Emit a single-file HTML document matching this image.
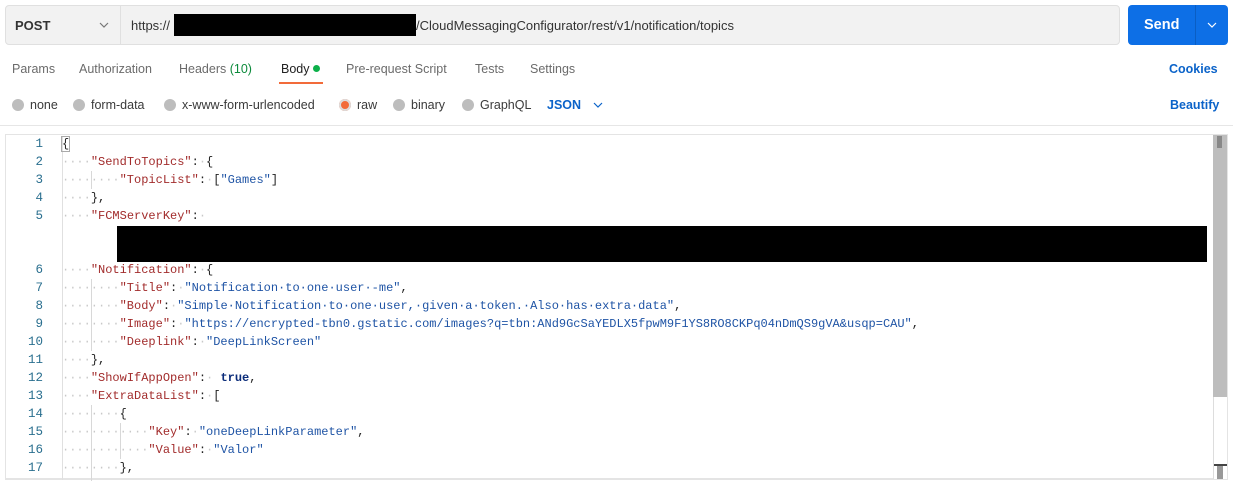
<!DOCTYPE html>
<html><head><meta charset="utf-8"><style>
*{margin:0;padding:0;box-sizing:border-box}
body{width:1233px;height:481px;background:#fff;font-family:"Liberation Sans",sans-serif;position:relative;overflow:hidden;color:#212121}
.abs{position:absolute}
.url{left:5px;top:5px;width:1115px;height:40px;background:#f2f2f2;border:1px solid #e0e0e0;border-radius:4px}
.method{left:5px;top:5px;width:116px;height:40px;border-right:1px solid #e0e0e0}
.t13{font-size:13px}
.send{left:1128px;top:5px;width:100px;height:40px;background:#0d6fe6;border-radius:4px;color:#fff}
.tab{top:62px;font-size:12.5px;color:#6b6b6b}
.radio{top:98px;font-size:12.5px;color:#3a3a3a}
.dot{display:inline-block;width:12px;height:12px;border-radius:50%;background:#bdbdbd;vertical-align:-2px;margin-right:6px}
.editor{left:5px;top:134px;width:1223px;height:346px;border:1px solid #e4e4e4;border-bottom:2px solid #e4e4e4}
.ln{position:absolute;left:0;width:43px;text-align:right;font-family:"Liberation Mono",monospace;font-size:12.5px;color:#2a6f8f;line-height:18px}
.code{position:absolute;left:62px;font-family:"Liberation Mono",monospace;font-size:12px;line-height:18px;white-space:pre;color:#222}
.d{color:#c8c8c8}.k{color:#a22c2c}.s{color:#1f54a5}.b{color:#0b2c7a;font-weight:bold}
.g{position:absolute;width:1px;background:#d8d8d8}
</style></head><body>
<div class="abs url"></div>
<div class="abs method"></div>
<div class="abs t13" style="left:15px;top:18px;font-weight:bold;color:#333">POST</div>
<svg class="abs" style="left:99px;top:21px" width="10" height="8"><path d="M1 2l4 4 4-4" fill="none" stroke="#777" stroke-width="1.2"/></svg>
<div class="abs t13" style="left:131px;top:18px;color:#333">https://</div>
<div class="abs" style="left:174px;top:14px;width:242px;height:22px;background:#000"></div>
<div class="abs t13" style="left:416px;top:18px;color:#333">/CloudMessagingConfigurator/rest/v1/notification/topics</div>
<div class="abs send"></div>
<div class="abs" style="left:1195px;top:5px;width:1px;height:40px;background:#0a5ec4"></div>
<div class="abs" style="left:1144px;top:17px;color:#fff;font-size:14.5px;font-weight:bold">Send</div>
<svg class="abs" style="left:1207px;top:21px" width="10" height="8"><path d="M1 2l4 4 4-4" fill="none" stroke="#fff" stroke-width="1.2"/></svg>

<div class="abs tab" style="left:12px">Params</div>
<div class="abs tab" style="left:79px">Authorization</div>
<div class="abs tab" style="left:179px">Headers <span style="color:#0c8a3b">(10)</span></div>
<div class="abs tab" style="left:281px;color:#212121">Body <span style="display:inline-block;width:7px;height:7px;border-radius:50%;background:#0cb04a;vertical-align:1px"></span></div>
<div class="abs" style="left:279px;top:82px;width:44px;height:2px;background:#f26b3a"></div>
<div class="abs tab" style="left:346px">Pre-request Script</div>
<div class="abs tab" style="left:475px">Tests</div>
<div class="abs tab" style="left:530px">Settings</div>
<div class="abs" style="left:1169px;top:62px;font-size:12.5px;font-weight:bold;color:#0b63c9">Cookies</div>

<div class="abs radio" style="left:12px"><span class="dot"></span>none</div>
<div class="abs radio" style="left:73px"><span class="dot"></span>form-data</div>
<div class="abs radio" style="left:164px"><span class="dot"></span>x-www-form-urlencoded</div>
<div class="abs radio" style="left:339px"><span class="dot" style="background:#f26b3a;box-shadow:inset 0 0 0 2px #ddd"></span>raw</div>
<div class="abs radio" style="left:393px"><span class="dot"></span>binary</div>
<div class="abs radio" style="left:462px"><span class="dot"></span>GraphQL</div>
<div class="abs" style="left:547px;top:98px;font-size:12.5px;font-weight:bold;color:#0b63c9">JSON</div>
<svg class="abs" style="left:593px;top:101px" width="10" height="8"><path d="M1 2l4 4 4-4" fill="none" stroke="#0b63c9" stroke-width="1.2"/></svg>
<div class="abs" style="left:1170px;top:98px;font-size:12.5px;font-weight:bold;color:#0b63c9">Beautify</div>
<div class="abs" style="left:0;top:125px;width:1233px;height:1px;background:#e6e6e6"></div>

<div class="abs editor"></div>
<div class="abs" style="left:62px;top:136px;width:1px;height:344px;background:#e0e0e0"></div>
<div class="g" style="left:91px;top:171px;height:18px"></div>
<div class="g" style="left:91px;top:279px;height:72px"></div>
<div class="g" style="left:91px;top:405px;height:76px"></div>
<div class="g" style="left:120px;top:423px;height:36px"></div>
<div class="abs" style="left:1213px;top:135px;width:14px;height:344px;background:#fff;border-left:1px solid #ddd"></div>
<div class="abs" style="left:1213px;top:135px;width:14px;height:262px;background:#bdbdbd"></div>
<div class="abs" style="left:1217px;top:136px;width:5px;height:12px;background:#888"></div>
<div class="abs" style="left:1214px;top:464px;width:13px;height:2px;background:#444"></div>
<div class="abs" style="left:1217px;top:466px;width:6px;height:13px;background:#999"></div>
<div class="abs" style="left:117px;top:226px;width:1090px;height:36px;background:#000"></div>

<div class="ln" style="top:135px">1<br>2<br>3<br>4<br>5</div>
<div class="ln" style="top:261px">6<br>7<br>8<br>9<br>10<br>11<br>12<br>13<br>14<br>15<br>16<br>17</div>
<div class="code" style="top:135px"><span style="outline:1px solid #aaa">{</span>
<span class="d">····</span><span class="k">"SendToTopics"</span>:<span class="d">·</span>{
<span class="d">········</span><span class="k">"TopicList"</span>:<span class="d">·</span>[<span class="s">"Games"</span>]
<span class="d">····</span>},
<span class="d">····</span><span class="k">"FCMServerKey"</span>:<span class="d">·</span></div>
<div class="code" style="top:261px"><span class="d">····</span><span class="k">"Notification"</span>:<span class="d">·</span>{
<span class="d">········</span><span class="k">"Title"</span>:<span class="d">·</span><span class="s">"Notification·to·one·user·-me"</span>,
<span class="d">········</span><span class="k">"Body"</span>:<span class="d">·</span><span class="s">"Simple·Notification·to·one·user,·given·a·token.·Also·has·extra·data"</span>,
<span class="d">········</span><span class="k">"Image"</span>:<span class="d">·</span><span class="s">"https://encrypted-tbn0.gstatic.com/images?q=tbn:ANd9GcSaYEDLX5fpwM9F1YS8RO8CKPq04nDmQS9gVA&amp;usqp=CAU"</span>,
<span class="d">········</span><span class="k">"Deeplink"</span>:<span class="d">·</span><span class="s">"DeepLinkScreen"</span>
<span class="d">····</span>},
<span class="d">····</span><span class="k">"ShowIfAppOpen"</span>:<span class="d">·</span> <span class="b">true</span>,
<span class="d">····</span><span class="k">"ExtraDataList"</span>:<span class="d">·</span>[
<span class="d">········</span>{
<span class="d">············</span><span class="k">"Key"</span>:<span class="d">·</span><span class="s">"oneDeepLinkParameter"</span>,
<span class="d">············</span><span class="k">"Value"</span>:<span class="d">·</span><span class="s">"Valor"</span>
<span class="d">········</span>},</div>
</body></html>
